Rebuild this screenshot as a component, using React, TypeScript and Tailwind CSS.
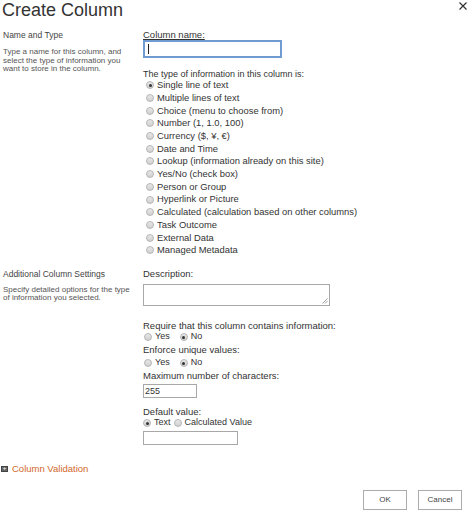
import React from "react";

function Radio({ checked = false }: { checked?: boolean }) {
  return (
    <span className="inline-flex items-center justify-center w-[8px] h-[8px] rounded-full border border-[#b5b5b5] bg-gradient-to-b from-[#e8e8e8] to-[#d0d0d0] shrink-0">
      {checked && <span className="w-[3px] h-[3px] rounded-full bg-[#333]" />}
    </span>
  );
}

const types = [
  "Single line of text",
  "Multiple lines of text",
  "Choice (menu to choose from)",
  "Number (1, 1.0, 100)",
  "Currency ($, ¥, €)",
  "Date and Time",
  "Lookup (information already on this site)",
  "Yes/No (check box)",
  "Person or Group",
  "Hyperlink or Picture",
  "Calculated (calculation based on other columns)",
  "Task Outcome",
  "External Data",
  "Managed Metadata",
];

export default function App() {
  return (
    <div className="w-[474px] h-[511px] bg-white text-[#444] font-['Liberation_Sans',Arial,sans-serif] flex flex-col overflow-hidden">
      {/* Header */}
      <div className="h-[30px] flex justify-between items-start">
        <div className="pl-[2px] pt-[0px] text-[18px] leading-[21px] text-[#333]">Create Column</div>
        <svg width="10" height="10" viewBox="0 0 10 10" className="mt-[1px] mr-[6px]">
          <path d="M1.5 1.5 L8.5 8.5 M8.5 1.5 L1.5 8.5" stroke="#333" strokeWidth="1.2" />
        </svg>
      </div>

      {/* Section 1 */}
      <div className="flex">
        <div className="w-[143px] pl-[3px] shrink-0">
          <div className="text-[8.5px] leading-[10px] text-[#444]">Name and Type</div>
          <div className="mt-[8px] text-[8px] leading-[8.5px] text-[#555] w-[128px]">
            Type a name for this column, and select the type of information you want to store in the column.
          </div>
        </div>
        <div className="flex flex-col">
          <div className="text-[9.5px] leading-[10px] text-[#333] underline">Column name:</div>
          <div className="w-[139px] h-[18px] border-2 border-[#6f9bd1] flex items-center pl-[3px]">
            <span className="w-px h-[10px] bg-[#222]" />
          </div>
          <div className="mt-[11px] text-[9px] leading-[10px] text-[#333]">The type of information in this column is:</div>
          <div className="flex flex-col">
            {types.map((t, i) => (
              <div key={t} className="h-[12.7px] flex items-center pl-[3px] gap-[3px] text-[9.4px] text-[#333]">
                <Radio checked={i === 0} />
                <span>{t}</span>
              </div>
            ))}
          </div>
        </div>
      </div>

      {/* Section 2 */}
      <div className="flex mt-[12px]">
        <div className="w-[143px] pl-[3px] shrink-0">
          <div className="text-[8.5px] leading-[10px] text-[#444]">Additional Column Settings</div>
          <div className="mt-[7px] text-[8px] leading-[8.5px] text-[#555] w-[132px]">
            Specify detailed options for the type of information you selected.
          </div>
        </div>
        <div className="flex flex-col">
          <div className="text-[9.5px] leading-[10px] text-[#333]">Description:</div>
          <div className="relative mt-[5px] w-[187px] h-[22px] border border-[#a8a8a8]">
            <svg width="6" height="6" viewBox="0 0 6 6" className="absolute right-[1px] bottom-[1px]">
              <path d="M5.5 0.5 L0.5 5.5 M5.5 3 L3 5.5" stroke="#888" strokeWidth="0.8" />
            </svg>
          </div>
          <div className="mt-[15px] text-[9.5px] leading-[10px] text-[#333]">Require that this column contains information:</div>
          <div className="h-[13px] flex items-center pl-[1px] text-[9px] text-[#333]">
            <Radio />
            <span className="ml-[3px]">Yes</span>
            <span className="ml-[10px] flex"><Radio checked /></span>
            <span className="ml-[3px]">No</span>
          </div>
          <div className="h-[13px] flex items-center text-[9.5px] text-[#333]">Enforce unique values:</div>
          <div className="h-[13px] flex items-center pl-[1px] text-[9px] text-[#333]">
            <Radio />
            <span className="ml-[3px]">Yes</span>
            <span className="ml-[10px] flex"><Radio checked /></span>
            <span className="ml-[3px]">No</span>
          </div>
          <div className="h-[13px] flex items-center text-[9.5px] text-[#333]">Maximum number of characters:</div>
          <div className="mt-[1px] w-[54px] h-[14px] border border-[#a8a8a8] text-[9px] leading-[12px] pl-[1px] text-[#333]">255</div>
          <div className="mt-[9px] h-[10px] flex items-center text-[9.5px] text-[#333]">Default value:</div>
          <div className="h-[13px] flex items-center text-[9px] text-[#333]">
            <Radio checked />
            <span className="ml-[3px]">Text</span>
            <span className="ml-[3px] flex"><Radio /></span>
            <span className="ml-[3px]">Calculated Value</span>
          </div>
          <div className="mt-[1px] w-[95px] h-[14px] border border-[#a8a8a8]" />
        </div>
      </div>

      {/* Column validation */}
      <div className="mt-[19px] flex items-center h-[10px] pl-[1px]">
        <span className="w-[7px] h-[6px] bg-[#666] border border-[#444] flex items-center justify-center">
          <span className="text-white text-[6px] leading-[5px]">+</span>
        </span>
        <span className="ml-[4px] text-[9.5px] text-[#d2682c]">Column Validation</span>
      </div>

      {/* Buttons */}
      <div className="mt-auto flex justify-end gap-[11px] pr-[12px] pb-[1px]">
        <button className="w-[44px] h-[20px] border border-[#ababab] bg-white text-[8px] text-[#444]">OK</button>
        <button className="w-[44px] h-[20px] border border-[#ababab] bg-white text-[8px] text-[#444]">Cancel</button>
      </div>
    </div>
  );
}
